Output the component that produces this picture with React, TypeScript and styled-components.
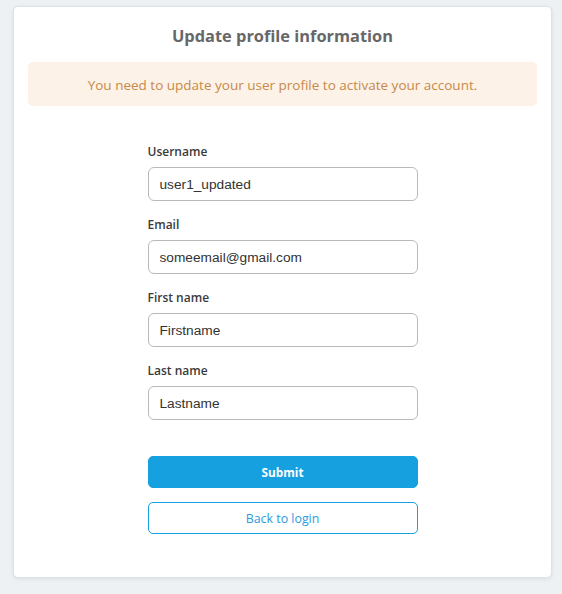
import React from "react";
import styled, { createGlobalStyle } from "styled-components";

const Global = createGlobalStyle`
  html, body { margin: 0; padding: 0; background: #eef1f4; }
  body { font-family: "Open Sans", "Noto Sans", sans-serif; }
  * { box-sizing: border-box; }
`;

const Page = styled.div`
  padding: 6px 10px 16px 13px;
  min-height: 594px;
`;

const Card = styled.div`
  width: 539px;
  height: 572px;
  background: #fff;
  border: 1px solid #dfe2e5;
  border-radius: 5px;
  box-shadow: 0 1px 4px rgba(0, 0, 0, 0.08);
  padding: 19px 14px 0;
  display: flex;
  flex-direction: column;
  align-items: center;
`;

const Title = styled.h1`
  margin: 0 0 16px;
  font-size: 16.4px;
  line-height: 20px;
  font-weight: 700;
  color: #676767;
  text-align: center;
`;

const Alert = styled.div`
  align-self: stretch;
  height: 44px;
  padding-top: 1px;
  background: #fcf2e7;
  border-radius: 5px;
  color: #c8894b;
  font-size: 13.5px;
  display: flex;
  align-items: center;
  justify-content: center;
`;

const Form = styled.form`
  width: 270px;
  margin-top: 37px;
  display: flex;
  flex-direction: column;
`;

const Field = styled.div`
  display: flex;
  flex-direction: column;
  gap: 7px;
  margin-bottom: 15px;
`;

const Label = styled.label`
  font-size: 12px;
  line-height: 17px;
  font-weight: 600;
  color: #3a3a3a;
`;

const Input = styled.input`
  height: 34px;
  border: 1px solid #b9b9b9;
  border-radius: 6px;
  padding: 0 11px;
  font-family: "Liberation Sans", Arial, sans-serif;
  font-size: 13.7px;
  color: #333;
  outline: none;
`;

const Button = styled.button<{ $primary?: boolean }>`
  height: 32px;
  border-radius: 5px;
  font-family: "Open Sans", "Noto Sans", sans-serif;
  font-size: ${(p) => (p.$primary ? "11.8px" : "12.4px")};
  font-weight: ${(p) => (p.$primary ? 700 : 500)};
  cursor: pointer;
  background: ${(p) => (p.$primary ? "#16a0df" : "#fff")};
  color: ${(p) => (p.$primary ? "#fff" : "#2f9ae0")};
  border: 1px solid #16a0df;
  margin-top: ${(p) => (p.$primary ? "21px" : "14px")};
`;

const fields = [
  { label: "Username", value: "user1_updated" },
  { label: "Email", value: "someemail@gmail.com" },
  { label: "First name", value: "Firstname" },
  { label: "Last name", value: "Lastname" },
];

export default function App() {
  return (
    <>
      <Global />
      <Page>
        <Card>
          <Title>Update profile information</Title>
          <Alert>You need to update your user profile to activate your account.</Alert>
          <Form onSubmit={(e) => e.preventDefault()}>
            {fields.map((f) => (
              <Field key={f.label}>
                <Label>{f.label}</Label>
                <Input defaultValue={f.value} />
              </Field>
            ))}
            <Button $primary type="submit">Submit</Button>
            <Button type="button">Back to login</Button>
          </Form>
        </Card>
      </Page>
    </>
  );
}
